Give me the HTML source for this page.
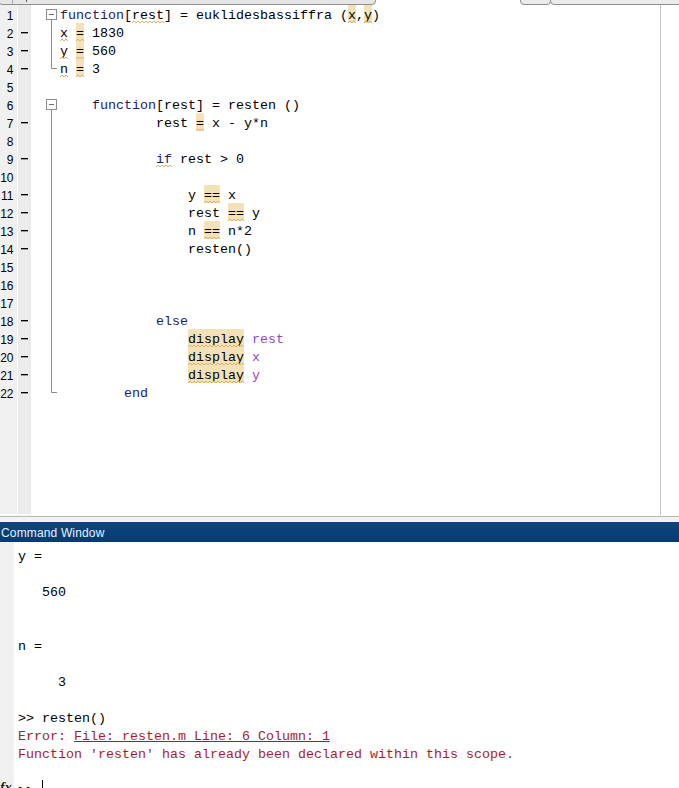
<!DOCTYPE html>
<html><head><meta charset="utf-8"><style>
*{margin:0;padding:0;box-sizing:border-box}
html,body{width:679px;height:788px;overflow:hidden;background:#fff}
body{position:relative;font-family:"Liberation Mono",monospace;font-size:13.33px;color:#000}
.a{position:absolute}
.ln{position:absolute;left:0;width:13.5px;text-align:right;font-family:"Liberation Sans",sans-serif;font-size:12px;line-height:18px;color:#000}
.cl{position:absolute;white-space:pre;line-height:18px;height:18px}
.hl{position:absolute;background:#f3e2b8;height:18px}
.cmd{position:absolute;left:18px;white-space:pre;line-height:18px}
.err{color:#a81e1e}
</style></head><body>
<div class="a" style="left:-2px;top:-3px;width:378px;height:8px;background:#e6e6e6;border:1px solid #8e8e8e;border-radius:0 0 4px 4px"></div>
<div class="a" style="left:12px;top:0;width:1px;height:4px;background:#a8a8a8"></div>
<div class="a" style="left:26px;top:0;width:1px;height:2px;background:#606060"></div>
<div class="a" style="left:520px;top:-3px;width:31px;height:8px;background:#ebebeb;border:1px solid #8e8e8e;border-radius:0 0 4px 4px"></div>
<div class="a" style="left:550px;top:-3px;width:140px;height:8px;background:#ebebeb;border:1px solid #8e8e8e;border-radius:0 0 4px 4px"></div>
<div class="a" style="left:0;top:5px;width:18px;height:509px;background:#f0f0f0"></div>
<div class="a" style="left:17px;top:5px;width:1px;height:509px;background:#fafafa"></div>
<div class="a" style="left:18px;top:5px;width:13px;height:509px;background:linear-gradient(90deg,#ebebeb 0,#ebebeb 3px,#eeeeee 4px,#eaeaea 6px,#eeeeee 9px,#e9e9e9 12px)"></div>
<div class="a" style="left:660px;top:5px;width:1px;height:511px;background:#c4c4c4"></div>
<div class="hl" style="left:348px;top:5px;width:8px"></div>
<div class="hl" style="left:364px;top:5px;width:8px"></div>
<div class="hl" style="left:76px;top:23px;width:8px"></div>
<div class="hl" style="left:76px;top:41px;width:8px"></div>
<div class="hl" style="left:76px;top:59px;width:8px"></div>
<div class="hl" style="left:196px;top:113px;width:8px"></div>
<div class="hl" style="left:204px;top:185px;width:16px"></div>
<div class="hl" style="left:228px;top:203px;width:16px"></div>
<div class="hl" style="left:204px;top:221px;width:16px"></div>
<div class="hl" style="left:188px;top:329px;width:56px"></div>
<div class="hl" style="left:188px;top:347px;width:56px"></div>
<div class="hl" style="left:188px;top:365px;width:56px"></div>
<div class="ln" style="top:7px">1</div>
<div class="ln" style="top:25px">2</div>
<div class="ln" style="top:43px">3</div>
<div class="ln" style="top:61px">4</div>
<div class="ln" style="top:79px">5</div>
<div class="ln" style="top:97px">6</div>
<div class="ln" style="top:115px">7</div>
<div class="ln" style="top:133px">8</div>
<div class="ln" style="top:151px">9</div>
<div class="ln" style="top:169px">10</div>
<div class="ln" style="top:187px">11</div>
<div class="ln" style="top:205px">12</div>
<div class="ln" style="top:223px">13</div>
<div class="ln" style="top:241px">14</div>
<div class="ln" style="top:259px">15</div>
<div class="ln" style="top:277px">16</div>
<div class="ln" style="top:295px">17</div>
<div class="ln" style="top:313px">18</div>
<div class="ln" style="top:331px">19</div>
<div class="ln" style="top:349px">20</div>
<div class="ln" style="top:367px">21</div>
<div class="ln" style="top:385px">22</div>
<div class="a" style="left:21px;top:32px;width:7px;height:1px;background:#000;box-shadow:0 1px 0 #999"></div>
<div class="a" style="left:21px;top:50px;width:7px;height:1px;background:#000;box-shadow:0 1px 0 #999"></div>
<div class="a" style="left:21px;top:68px;width:7px;height:1px;background:#000;box-shadow:0 1px 0 #999"></div>
<div class="a" style="left:21px;top:122px;width:7px;height:1px;background:#000;box-shadow:0 1px 0 #999"></div>
<div class="a" style="left:21px;top:158px;width:7px;height:1px;background:#000;box-shadow:0 1px 0 #999"></div>
<div class="a" style="left:21px;top:194px;width:7px;height:1px;background:#000;box-shadow:0 1px 0 #999"></div>
<div class="a" style="left:21px;top:212px;width:7px;height:1px;background:#000;box-shadow:0 1px 0 #999"></div>
<div class="a" style="left:21px;top:230px;width:7px;height:1px;background:#000;box-shadow:0 1px 0 #999"></div>
<div class="a" style="left:21px;top:248px;width:7px;height:1px;background:#000;box-shadow:0 1px 0 #999"></div>
<div class="a" style="left:21px;top:320px;width:7px;height:1px;background:#000;box-shadow:0 1px 0 #999"></div>
<div class="a" style="left:21px;top:338px;width:7px;height:1px;background:#000;box-shadow:0 1px 0 #999"></div>
<div class="a" style="left:21px;top:356px;width:7px;height:1px;background:#000;box-shadow:0 1px 0 #999"></div>
<div class="a" style="left:21px;top:374px;width:7px;height:1px;background:#000;box-shadow:0 1px 0 #999"></div>
<div class="a" style="left:21px;top:392px;width:7px;height:1px;background:#000;box-shadow:0 1px 0 #999"></div>
<div class="cl" style="left:60px;top:7px"><span style="color:#20206e">function</span>[rest] = euklidesbassiffra (x,y)</div>
<div class="cl" style="left:60px;top:25px">x = 1830</div>
<div class="cl" style="left:60px;top:43px">y = 560</div>
<div class="cl" style="left:60px;top:61px">n = 3</div>
<div class="cl" style="left:60px;top:97px">    <span style="color:#20206e">function</span>[rest] = resten ()</div>
<div class="cl" style="left:60px;top:115px">            rest = x - y*n</div>
<div class="cl" style="left:60px;top:151px">            <span style="color:#20206e">if</span> rest &gt; 0</div>
<div class="cl" style="left:60px;top:187px">                y == x</div>
<div class="cl" style="left:60px;top:205px">                rest == y</div>
<div class="cl" style="left:60px;top:223px">                n == n*2</div>
<div class="cl" style="left:60px;top:241px">                resten()</div>
<div class="cl" style="left:60px;top:313px">            <span style="color:#20206e">else</span></div>
<div class="cl" style="left:60px;top:331px">                display <span style="color:#9448c4">rest</span></div>
<div class="cl" style="left:60px;top:349px">                display <span style="color:#9448c4">x</span></div>
<div class="cl" style="left:60px;top:367px">                display <span style="color:#9448c4">y</span></div>
<div class="cl" style="left:60px;top:385px">        <span style="color:#20206e">end</span></div>
<svg class="a" style="left:0;top:0" width="679" height="520"><rect x="46.5" y="9.5" width="10" height="10" fill="#fff" stroke="#8c8c8c" stroke-width="1"/><line x1="49" y1="14.5" x2="54" y2="14.5" stroke="#707070" stroke-width="1"/><path d="M51.5 20 V68.5 H57" fill="none" stroke="#8c8c8c" stroke-width="1"/><rect x="46.5" y="99.5" width="10" height="10" fill="#fff" stroke="#8c8c8c" stroke-width="1"/><line x1="49" y1="104.5" x2="54" y2="104.5" stroke="#707070" stroke-width="1"/><path d="M51.5 110 V392.5 H57" fill="none" stroke="#8c8c8c" stroke-width="1"/><polyline points="132,23 134,21 136,23 138,21 140,23 142,21 144,23 146,21 148,23 150,21 152,23 154,21 156,23 158,21 160,23 162,21 164,23" fill="none" stroke="#dfb06c" stroke-width="1"/><polyline points="348,23 350,21 352,23 354,21 356,23" fill="none" stroke="#dfb06c" stroke-width="1"/><polyline points="364,23 366,21 368,23 370,21 372,23" fill="none" stroke="#dfb06c" stroke-width="1"/><polyline points="60,41 62,39 64,41 66,39 68,41" fill="none" stroke="#dfb06c" stroke-width="1"/><polyline points="76,41 78,39 80,41 82,39 84,41" fill="none" stroke="#dfb06c" stroke-width="1"/><polyline points="60,59 62,57 64,59 66,57 68,59" fill="none" stroke="#dfb06c" stroke-width="1"/><polyline points="76,59 78,57 80,59 82,57 84,59" fill="none" stroke="#dfb06c" stroke-width="1"/><polyline points="60,77 62,75 64,77 66,75 68,77" fill="none" stroke="#dfb06c" stroke-width="1"/><polyline points="76,77 78,75 80,77 82,75 84,77" fill="none" stroke="#dfb06c" stroke-width="1"/><polyline points="196,131 198,129 200,131 202,129 204,131" fill="none" stroke="#dfb06c" stroke-width="1"/><polyline points="156,167 158,165 160,167 162,165 164,167 166,165 168,167 170,165 172,167" fill="none" stroke="#dfb06c" stroke-width="1"/><polyline points="204,203 206,201 208,203 210,201 212,203 214,201 216,203 218,201 220,203" fill="none" stroke="#dfb06c" stroke-width="1"/><polyline points="228,221 230,219 232,221 234,219 236,221 238,219 240,221 242,219 244,221" fill="none" stroke="#dfb06c" stroke-width="1"/><polyline points="204,239 206,237 208,239 210,237 212,239 214,237 216,239 218,237 220,239" fill="none" stroke="#dfb06c" stroke-width="1"/><polyline points="188,347 190,345 192,347 194,345 196,347 198,345 200,347 202,345 204,347 206,345 208,347 210,345 212,347 214,345 216,347 218,345 220,347 222,345 224,347 226,345 228,347 230,345 232,347 234,345 236,347 238,345 240,347 242,345 244,347" fill="none" stroke="#dfb06c" stroke-width="1"/><polyline points="188,365 190,363 192,365 194,363 196,365 198,363 200,365 202,363 204,365 206,363 208,365 210,363 212,365 214,363 216,365 218,363 220,365 222,363 224,365 226,363 228,365 230,363 232,365 234,363 236,365 238,363 240,365 242,363 244,365" fill="none" stroke="#dfb06c" stroke-width="1"/><polyline points="188,383 190,381 192,383 194,381 196,383 198,381 200,383 202,381 204,383 206,381 208,383 210,381 212,383 214,381 216,383 218,381 220,383 222,381 224,383 226,381 228,383 230,381 232,383 234,381 236,383 238,381 240,383 242,381 244,383" fill="none" stroke="#dfb06c" stroke-width="1"/></svg>
<div class="a" style="left:0;top:515px;width:679px;height:1px;background:#f7f7f3"></div>
<div class="a" style="left:0;top:516px;width:679px;height:1px;background:#b9bbb4"></div>
<div class="a" style="left:0;top:517px;width:679px;height:5px;background:#f3f1f1"></div>
<div class="a" style="left:0;top:522px;width:679px;height:20px;background:linear-gradient(#0d4582,#083a70)"></div>
<div class="a" style="left:1px;top:523px;height:20px;line-height:20px;font-family:'Liberation Sans',sans-serif;font-size:12px;letter-spacing:0.15px;color:#e6f2ff;white-space:pre">Command Window</div>
<div class="a" style="left:0;top:542px;width:14px;height:246px;background:#f0f0f0"></div>
<div class="cmd" style="top:548px">y =</div>
<div class="cmd" style="top:584px">   560</div>
<div class="cmd" style="top:638px">n =</div>
<div class="cmd" style="top:674px">     3</div>
<div class="cmd" style="top:710px">&gt;&gt; resten()</div>
<div class="cmd err" style="top:728px">Error: <span style="text-decoration:underline">File: resten.m Line: 6 Column: 1</span></div>
<div class="cmd err" style="top:746px">Function 'resten' has already been declared within this scope.</div>
<div class="cmd" style="top:782px">&gt;&gt; </div>
<div class="a" style="left:42px;top:780px;width:1px;height:8px;background:#000"></div>
<div class="a" style="left:0px;top:779px;font-family:'Liberation Serif',serif;font-style:italic;font-weight:bold;font-size:14px;line-height:18px;color:#222">fx</div>
</body></html>
